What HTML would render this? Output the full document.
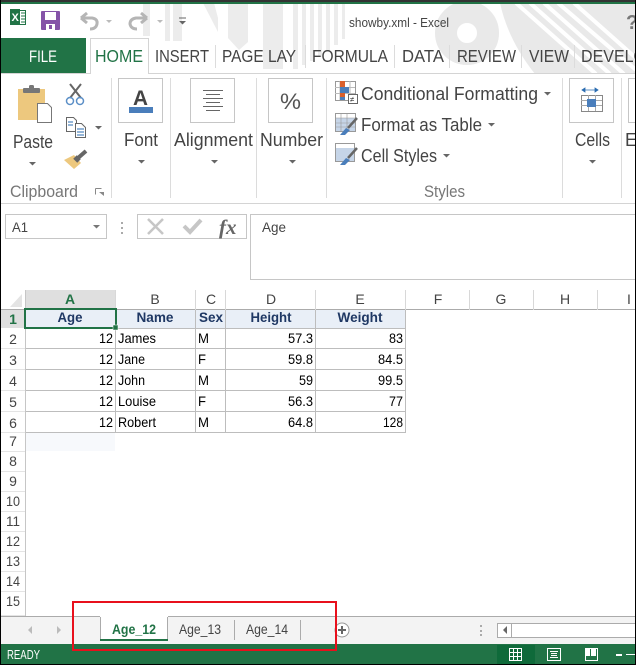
<!DOCTYPE html>
<html><head><meta charset="utf-8"><style>
html,body{margin:0;padding:0;background:#fff;width:636px;height:665px;overflow:hidden}
svg{display:block}
text{font-family:"Liberation Sans",sans-serif}
.tab{font-size:17.5px;fill:#444}
.rb{font-size:18px;fill:#444}
.gl{font-size:17px;fill:#777}
.ch{font-size:14px;fill:#444;text-anchor:middle}
.rh{font-size:14px;fill:#444;text-anchor:middle}
.c{font-size:14px;fill:#000}
.r{font-size:14px;fill:#000;text-anchor:end}
.h{font-size:14px;font-weight:bold;fill:#1f3864;text-anchor:middle}
.s{font-size:14px;fill:#444;text-anchor:middle}
</style></head><body>
<svg width="636" height="665" viewBox="0 0 636 665" xmlns="http://www.w3.org/2000/svg">
<rect width="636" height="665" fill="#fff"/>
<!-- watermark -->
<g fill="#ececec">
<rect x="143" y="3" width="7" height="33"/><rect x="165" y="3" width="5" height="38"/><rect x="173" y="3" width="9" height="38"/>
<path d="M203 3 L214 3 L218 18 L218 32 Z"/>
<path d="M228 3 L248 3 L248 42 L239 50 L228 38 Z"/>
<rect x="263" y="3" width="20" height="66"/>
<rect x="293" y="3" width="5" height="66"/><rect x="302" y="3" width="4" height="62"/><rect x="310" y="3" width="4" height="58"/><rect x="318" y="3" width="4" height="54"/><rect x="326" y="3" width="4" height="48"/><rect x="334" y="3" width="4" height="42"/><rect x="342" y="3" width="3" height="36"/>
<circle cx="467" cy="33" r="21" fill="none" stroke="#e9e9e9" stroke-width="22"/>
<path d="M500 3 L636 3 L636 74 L535 74 Q508 40 500 3 Z" fill="#e9e9e9"/>
</g>
<g stroke="#fff" stroke-width="4"><path d="M516 3 L596 74M530 3 L610 74M544 3 L624 74M558 3 L636 70M574 3 L636 58"/></g>
<rect x="0" y="2" width="636" height="2" fill="#217346"/>
<rect x="0" y="0" width="636" height="2" fill="#333"/>
<!-- QAT -->
<rect x="10.500" y="10.500" width="15" height="14" fill="#fff" stroke="#217346"/>
<rect x="10" y="9" width="10" height="16" fill="#217346"/>
<text x="11.500" y="21" font-size="11" font-weight="bold" fill="#fff">X</text>
<path d="M21 13h4M21 16h4M21 19h4M21 22h4" stroke="#217346"/>
<rect x="41" y="11" width="19" height="19" rx="1" fill="#8553a8"/>
<rect x="45" y="12" width="11" height="8" fill="#fff"/><rect x="46" y="24" width="9" height="6" fill="#fff"/><rect x="49" y="25" width="3" height="4" fill="#8553a8"/>
<path d="M81 18 L92 18 Q98 19 97 24 Q96 29 90 29 M81 18 L87 13 M81 18 L87 23" fill="none" stroke="#b5b5b5" stroke-width="3"/>
<path d="M106 20l6 0-3 3z" fill="#bbb"/>
<path d="M147 18 L136 18 Q130 19 130 24 Q131 29 137 29 M147 18 L141 13 M147 18 L141 23" fill="none" stroke="#b5b5b5" stroke-width="3"/>
<path d="M157 20l6 0-3 3z" fill="#bbb"/>
<path d="M179 18h7" stroke="#666"/><path d="M179 21h7l-3.500 3.500z" fill="#666"/>
<text x="349" y="27" font-size="13" fill="#444" textLength="100" lengthAdjust="spacingAndGlyphs">showby.xml - Excel</text>
<text x="626" y="29" font-size="20" font-weight="bold" fill="#777">?</text>
<!-- tabs -->
<rect x="1" y="38" width="85" height="36" fill="#217346"/>
<text x="29" y="62" font-size="17" fill="#fff" textLength="28" lengthAdjust="spacingAndGlyphs">FILE</text>
<path d="M0 73.500H636" stroke="#d4d4d4"/>
<path d="M90.500 74V38.500H148.500V74" fill="#fff" stroke="#d4d4d4"/>
<rect x="91" y="70" width="57" height="5" fill="#fff"/>
<text x="95" y="62" class="tab" style="fill:#217346" textLength="48" lengthAdjust="spacingAndGlyphs">HOME</text>
<text x="155" y="62" class="tab" textLength="54" lengthAdjust="spacingAndGlyphs">INSERT</text>
<text x="222" y="62" class="tab" textLength="74" lengthAdjust="spacingAndGlyphs">PAGE LAY</text>
<text x="312" y="62" class="tab" textLength="76" lengthAdjust="spacingAndGlyphs">FORMULA</text>
<text x="402" y="62" class="tab" textLength="42" lengthAdjust="spacingAndGlyphs">DATA</text>
<text x="457" y="62" class="tab" textLength="59" lengthAdjust="spacingAndGlyphs">REVIEW</text>
<text x="529" y="62" class="tab" textLength="40" lengthAdjust="spacingAndGlyphs">VIEW</text>
<text x="581" y="62" class="tab" textLength="65" lengthAdjust="spacingAndGlyphs">DEVELO</text>
<path d="M215.500 45v23M305.500 45v23M394.500 45v23M449.500 45v23M521.500 45v23M574.500 45v23" stroke="#dcdcdc"/>
<!-- ribbon -->
<path d="M111.500 78v120M170.500 78v120M256.500 78v120M326.500 78v120M562.500 78v120M621.500 78v120" stroke="#dcdcdc"/>
<path d="M0 203.500H636" stroke="#d4d4d4"/>
<!-- paste -->
<path d="M18 89h27v31H18z" fill="#edc87e"/>
<rect x="23" y="88" width="17" height="5" rx="1" fill="#777"/><rect x="29" y="85" width="5" height="5" rx="1.500" fill="#777"/>
<path d="M37.500 103.500h10l4 4v15h-14z" fill="#fff" stroke="#777"/>
<text x="13" y="148" class="rb" textLength="40" lengthAdjust="spacingAndGlyphs">Paste</text>
<path d="M29 162h7l-3.500 3.500z" fill="#666"/>
<path d="M70 84 L81 98M81 84 L70 98" stroke="#666" stroke-width="2"/>
<circle cx="70" cy="101" r="3.500" fill="none" stroke="#5b8fc7" stroke-width="1.500"/><circle cx="80" cy="101" r="3.500" fill="none" stroke="#5b8fc7" stroke-width="1.500"/>
<path d="M66.500 117.500h7l3 3v11h-10z" fill="#fff" stroke="#666"/>
<path d="M68 122h5M68 125h5" stroke="#2b6cb0"/>
<path d="M75.500 123.500h6l4 4v10h-10z" fill="#fff" stroke="#666"/>
<path d="M77 129h7M77 132h7M77 135h7" stroke="#2b6cb0"/>
<path d="M95 126h7l-3.500 3.500z" fill="#666"/>
<path d="M64 160 L74 155 L81 163 L74 169 Z" fill="#edc87e"/>
<path d="M75 157 L79 161" stroke="#666" stroke-width="5"/>
<path d="M78 158 L86 151" stroke="#666" stroke-width="4"/>
<text x="10" y="197" class="gl" textLength="68" lengthAdjust="spacingAndGlyphs">Clipboard</text>
<path d="M95.500 188.500h6M95.500 188.500v6" stroke="#888" fill="none"/><path d="M99 192l5 4v-4z" fill="#888"/>
<!-- boxes -->
<rect x="118.500" y="78.500" width="44" height="44" fill="#fff" stroke="#c6c6c6"/>
<text x="133" y="105" font-size="21" font-weight="bold" fill="#444" textLength="15" lengthAdjust="spacingAndGlyphs">A</text>
<rect x="129" y="107" width="24" height="6" fill="#4a7ebb"/>
<text x="124" y="146" class="rb" textLength="34" lengthAdjust="spacingAndGlyphs">Font</text>
<path d="M138 160h7l-3.500 3.500z" fill="#666"/>
<rect x="190.500" y="78.500" width="44" height="44" fill="#fff" stroke="#c6c6c6"/>
<path d="M203 90.500h20M206 94.500h14M203 98.500h20M206 102.500h14M203 106.500h20M206 110.500h14" stroke="#666"/>
<text x="174" y="146" class="rb" textLength="79" lengthAdjust="spacingAndGlyphs">Alignment</text>
<path d="M211 160h7l-3.500 3.500z" fill="#666"/>
<rect x="268.500" y="78.500" width="44" height="44" fill="#fff" stroke="#c6c6c6"/>
<text x="280" y="109" font-size="22" fill="#555" textLength="21" lengthAdjust="spacingAndGlyphs">%</text>
<text x="260" y="146" class="rb" textLength="63" lengthAdjust="spacingAndGlyphs">Number</text>
<path d="M289 160h7l-3.500 3.500z" fill="#666"/>
<!-- styles -->
<g stroke="#999" fill="#fff">
<rect x="335.500" y="81.500" width="20" height="19"/><rect x="335.500" y="113.500" width="20" height="18"/><rect x="335.500" y="143.500" width="19" height="18"/>
</g>
<path d="M340 81v19M350 81v19M335 87.500h20M335 93.500h20" stroke="#bbb"/>
<rect x="340" y="81" width="5" height="6" fill="#d9602d"/><rect x="340" y="87" width="9" height="6" fill="#4a7ebb"/><rect x="340" y="93" width="5" height="4" fill="#d9602d"/><rect x="340" y="97" width="5" height="3" fill="#4a7ebb"/>
<rect x="348.500" y="94.500" width="9" height="9" fill="#fff" stroke="#666"/>
<text x="350" y="102" font-size="8" fill="#333">≠</text>
<rect x="336" y="118" width="19" height="13" fill="#c6d5e8"/>
<path d="M341 114v18M347 114v18M336 118h20M336 123h20M336 127h20" stroke="#999" stroke-width=".6"/>
<path d="M340 135 L346 128 L350 130 L345 135 Z" fill="#4a7ebb"/><path d="M348 128 L357 118" stroke="#666" stroke-width="2.500"/>
<rect x="336" y="148" width="18" height="13" fill="#c6d5e8"/>
<path d="M340 165 L346 158 L350 160 L345 165 Z" fill="#4a7ebb"/><path d="M348 158 L357 148" stroke="#666" stroke-width="2.500"/>
<text x="361" y="100" class="rb" textLength="177" lengthAdjust="spacingAndGlyphs">Conditional Formatting</text>
<path d="M544 92h7l-3.500 3.500z" fill="#666"/>
<text x="361" y="131" class="rb" textLength="121" lengthAdjust="spacingAndGlyphs">Format as Table</text>
<path d="M488 123h7l-3.500 3.500z" fill="#666"/>
<text x="361" y="162" class="rb" textLength="76" lengthAdjust="spacingAndGlyphs">Cell Styles</text>
<path d="M443 154h7l-3.500 3.500z" fill="#666"/>
<text x="424" y="197" class="gl" textLength="41" lengthAdjust="spacingAndGlyphs">Styles</text>
<!-- cells -->
<rect x="569.500" y="78.500" width="44" height="44" fill="#fff" stroke="#c6c6c6"/>
<path d="M582 90h16M582 90l3-2v4zM598 90l-3-2v4z" stroke="#2b6cb0" fill="#2b6cb0" stroke-width=".8"/>
<rect x="581.500" y="95.500" width="21" height="16" fill="#fff" stroke="#888"/>
<path d="M588.500 95v16M595.500 95v16M581 100.500h21M581 105.500h21" stroke="#aaa"/>
<rect x="587" y="99" width="9" height="8" fill="#4a7ebb"/>
<text x="575" y="146" class="rb" textLength="35" lengthAdjust="spacingAndGlyphs">Cells</text>
<path d="M589 160h7l-3.500 3.500z" fill="#666"/>
<rect x="628.500" y="78.500" width="20" height="44" fill="#fff" stroke="#c6c6c6"/>
<text x="625" y="146" class="rb">E</text>
<!-- formula bar -->
<rect x="5.500" y="214.500" width="101" height="24" fill="#fff" stroke="#c6c6c6"/>
<text x="12" y="232" font-size="14" fill="#444" textLength="16" lengthAdjust="spacingAndGlyphs">A1</text>
<path d="M93 225h7l-3.500 3.500z" fill="#777"/>
<path d="M122 222v2M122 227v2M122 232v2" stroke="#aaa" stroke-width="2"/>
<rect x="137.500" y="214.500" width="109" height="24" fill="#fff" stroke="#c6c6c6"/>
<path d="M148 219 L163 234M163 219 L148 234" stroke="#c6c6c6" stroke-width="2.500"/>
<path d="M184 226 L190 232 L201 220" stroke="#c6c6c6" stroke-width="4" fill="none"/>
<text x="219" y="234" font-size="21" font-style="italic" font-weight="bold" fill="#666" style="font-family:'Liberation Serif',serif">fx</text>
<path d="M250.500 280V214.500H636M250.500 279.500H636" fill="none" stroke="#c6c6c6"/>
<text x="262" y="232" font-size="14" fill="#444" textLength="24" lengthAdjust="spacingAndGlyphs">Age</text>
<!-- grid header -->
<rect x="25" y="290" width="91" height="20" fill="#dfdfdf"/>
<path d="M10 307 L22 294 V307 Z" fill="#e4e4e4"/>
<path d="M25.500 290v326" stroke="#c6c6c6"/>
<path d="M1 309.500H636" stroke="#ababab"/>
<path d="M115.500 290v20M195.500 290v20M225.500 290v20M315.500 290v20M405.500 290v20M469.500 290v20M533.500 290v20M597.500 290v20" stroke="#d8d8d8"/>
<text x="70" y="304" class="ch" style="fill:#217346;font-weight:bold">A</text>
<text x="155" y="304" class="ch">B</text><text x="211" y="304" class="ch">C</text><text x="271" y="304" class="ch">D</text><text x="360" y="304" class="ch">E</text>
<text x="438" y="304" class="ch">F</text><text x="501" y="304" class="ch">G</text><text x="565" y="304" class="ch">H</text><text x="629" y="304" class="ch">I</text>
<!-- row headers -->
<rect x="1" y="310" width="24" height="18" fill="#dfdfdf"/>
<path d="M1 348.500h24M1 369.500h24M1 390.500h24M1 411.500h24M1 432.500h24M1 451.500h24M1 471.500h24M1 491.500h24M1 511.500h24M1 531.500h24M1 551.500h24M1 571.500h24M1 591.500h24M1 615.500h24" stroke="#e4e4e4"/>
<text x="13" y="324" class="rh" style="fill:#217346;font-weight:bold">1</text>
<text x="13" y="344" class="rh">2</text><text x="13" y="365" class="rh">3</text><text x="13" y="386" class="rh">4</text><text x="13" y="407" class="rh">5</text><text x="13" y="428" class="rh">6</text>
<text x="13" y="446" class="rh">7</text><text x="13" y="466" class="rh">8</text><text x="13" y="486" class="rh">9</text><text x="13" y="506" class="rh" textLength="14" lengthAdjust="spacingAndGlyphs">10</text><text x="13" y="526" class="rh" textLength="14" lengthAdjust="spacingAndGlyphs">11</text><text x="13" y="546" class="rh" textLength="14" lengthAdjust="spacingAndGlyphs">12</text><text x="13" y="566" class="rh" textLength="14" lengthAdjust="spacingAndGlyphs">13</text><text x="13" y="586" class="rh" textLength="14" lengthAdjust="spacingAndGlyphs">14</text><text x="13" y="606" class="rh" textLength="14" lengthAdjust="spacingAndGlyphs">15</text>
<!-- table -->
<rect x="26" y="310" width="380" height="18" fill="#e9eff7"/>
<rect x="26" y="433" width="89" height="18" fill="#f7f9fc"/>
<path d="M26 348.500H406M26 369.500H406M26 390.500H406M26 411.500H406M26 432.500H406M26 328.500H406" stroke="#bdbdbd"/>
<path d="M115.500 310v123M195.500 310v123M225.500 310v123M315.500 310v123M405.500 310v123" stroke="#bdbdbd"/>
<text x="70" y="322" class="h" textLength="25" lengthAdjust="spacingAndGlyphs">Age</text><text x="155" y="322" class="h" textLength="37" lengthAdjust="spacingAndGlyphs">Name</text><text x="211" y="322" class="h" textLength="24" lengthAdjust="spacingAndGlyphs">Sex</text><text x="271" y="322" class="h" textLength="41" lengthAdjust="spacingAndGlyphs">Height</text><text x="360" y="322" class="h" textLength="45" lengthAdjust="spacingAndGlyphs">Weight</text>
<text x="113" y="343" class="r" textLength="14" lengthAdjust="spacingAndGlyphs">12</text><text x="118" y="343" class="c" textLength="38" lengthAdjust="spacingAndGlyphs">James</text><text x="198" y="343" class="c" textLength="11" lengthAdjust="spacingAndGlyphs">M</text><text x="313" y="343" class="r" textLength="25" lengthAdjust="spacingAndGlyphs">57.3</text><text x="403" y="343" class="r" textLength="14" lengthAdjust="spacingAndGlyphs">83</text>
<text x="113" y="364" class="r" textLength="14" lengthAdjust="spacingAndGlyphs">12</text><text x="118" y="364" class="c" textLength="27" lengthAdjust="spacingAndGlyphs">Jane</text><text x="198" y="364" class="c" textLength="8" lengthAdjust="spacingAndGlyphs">F</text><text x="313" y="364" class="r" textLength="25" lengthAdjust="spacingAndGlyphs">59.8</text><text x="403" y="364" class="r" textLength="25" lengthAdjust="spacingAndGlyphs">84.5</text>
<text x="113" y="385" class="r" textLength="14" lengthAdjust="spacingAndGlyphs">12</text><text x="118" y="385" class="c" textLength="27" lengthAdjust="spacingAndGlyphs">John</text><text x="198" y="385" class="c" textLength="11" lengthAdjust="spacingAndGlyphs">M</text><text x="313" y="385" class="r" textLength="14" lengthAdjust="spacingAndGlyphs">59</text><text x="403" y="385" class="r" textLength="25" lengthAdjust="spacingAndGlyphs">99.5</text>
<text x="113" y="406" class="r" textLength="14" lengthAdjust="spacingAndGlyphs">12</text><text x="118" y="406" class="c" textLength="38" lengthAdjust="spacingAndGlyphs">Louise</text><text x="198" y="406" class="c" textLength="8" lengthAdjust="spacingAndGlyphs">F</text><text x="313" y="406" class="r" textLength="25" lengthAdjust="spacingAndGlyphs">56.3</text><text x="403" y="406" class="r" textLength="14" lengthAdjust="spacingAndGlyphs">77</text>
<text x="113" y="427" class="r" textLength="14" lengthAdjust="spacingAndGlyphs">12</text><text x="118" y="427" class="c" textLength="38" lengthAdjust="spacingAndGlyphs">Robert</text><text x="198" y="427" class="c" textLength="11" lengthAdjust="spacingAndGlyphs">M</text><text x="313" y="427" class="r" textLength="25" lengthAdjust="spacingAndGlyphs">64.8</text><text x="403" y="427" class="r" textLength="20" lengthAdjust="spacingAndGlyphs">128</text>
<rect x="25" y="309" width="91" height="19" fill="none" stroke="#217346" stroke-width="2"/>
<rect x="113" y="325" width="5" height="5" fill="#217346" stroke="#fff" stroke-width=".5"/>
<!-- sheet tabs -->
<rect x="1" y="617" width="635" height="27" fill="#f3f3f3"/>
<path d="M0 616.500H636" stroke="#ababab"/>
<rect x="100" y="616" width="68" height="24" fill="#fff"/>
<path d="M100.500 617v23M167.500 617v23" stroke="#ababab"/>
<rect x="100" y="639" width="68" height="2" fill="#217346"/>
<path d="M32 626v8l-4-4zM57 626v8l4-4z" fill="#bbb"/>
<text x="134" y="634" class="s" style="font-weight:bold;fill:#217346" textLength="44" lengthAdjust="spacingAndGlyphs">Age_12</text>
<text x="200" y="634" class="s" textLength="42" lengthAdjust="spacingAndGlyphs">Age_13</text>
<text x="267" y="634" class="s" textLength="42" lengthAdjust="spacingAndGlyphs">Age_14</text>
<path d="M234.500 620v20M300.500 620v20" stroke="#ababab"/>
<circle cx="342" cy="630" r="7" fill="#fff" stroke="#999"/>
<path d="M338 630h8M342 626v8" stroke="#666" stroke-width="2"/>
<path d="M481 625v2M481 630v2M481 634v2" stroke="#aaa" stroke-width="2"/>
<rect x="497.500" y="623.500" width="140" height="14" fill="#fff" stroke="#ababab"/>
<path d="M511.500 623v14" stroke="#ababab"/><path d="M507 626v8l-4-4z" fill="#666"/>
<!-- status -->
<rect x="1" y="644" width="635" height="20" fill="#217346"/>
<text x="7" y="659" font-size="12.500" fill="#fff" textLength="33" lengthAdjust="spacingAndGlyphs">READY</text>
<rect x="497" y="645" width="38" height="19" fill="#0f6a3a"/>
<g fill="none" stroke="#fff">
<rect x="509.500" y="648.500" width="12" height="12"/><path d="M513.500 648v12M517.500 648v12M509 652.500h13M509 656.500h13"/>
<rect x="547.500" y="648.500" width="13" height="12"/><path d="M550 651.500h8M551 653.500h6M551 655.500h6M550 657.500h8"/>
<rect x="585.500" y="648.500" width="12" height="12"/>
</g>
<rect x="586" y="649" width="4" height="7" fill="#fff"/><rect x="591" y="649" width="5" height="7" fill="#fff"/>
<rect x="616" y="654" width="6" height="2" fill="#fff"/><rect x="626" y="654" width="10" height="1" fill="#fff"/>
<!-- red annotation -->
<rect x="73" y="602" width="263" height="48" fill="none" stroke="#e8101c" stroke-width="2"/>
<!-- frame -->
<rect x="0" y="0" width="1" height="665" fill="#000"/>
<rect x="635" y="0" width="1" height="665" fill="#000"/>
<rect x="0" y="664" width="636" height="1" fill="#000"/>
</svg>
</body></html>
